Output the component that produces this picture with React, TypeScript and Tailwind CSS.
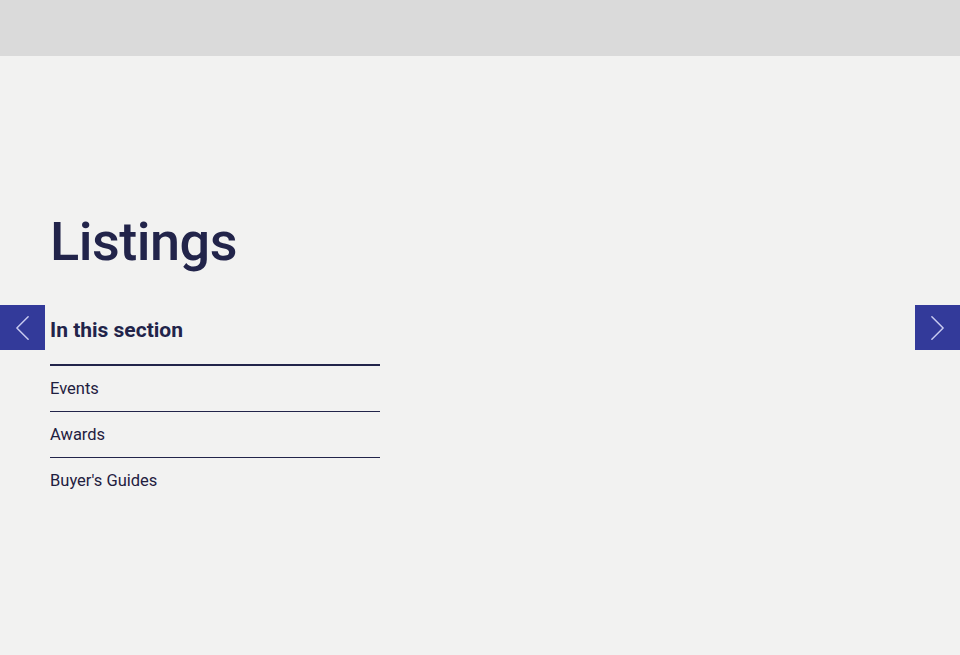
import { ChevronLeft, ChevronRight } from "lucide-react";

const links = ["Events", "Awards", "Buyer's Guides"];

const App = () => {
    return (
        <div className="relative min-h-[655px] bg-[#f2f2f1] font-['Roboto',sans-serif] text-[#22244a]">
            <div className="h-14 bg-[#dadada]" />
            <main className="px-[50px] pt-[159px]">
                <h1 className="text-[54px] font-medium leading-none tracking-[-0.5px]">Listings</h1>
                <section className="mt-[47px] w-[330px]">
                    <h2 className="text-[21px] font-bold leading-[28px] pb-[20px] border-b-2 border-[#22244a]">In this section</h2>
                    <ul>
                        {links.map((link, i) => (
                            <li
                                key={link}
                                className={"pt-px text-[16.5px] leading-[44px] text-[#1f2040] " + (i < links.length - 1 ? "border-b border-[#22244a]" : "")}
                            >
                                {link}
                            </li>
                        ))}
                    </ul>
                </section>
            </main>
            <button className="absolute left-0 top-[305px] flex h-[45px] w-[45px] items-center justify-center bg-[#333a9a] text-[#c9cbf0]">
                <ChevronLeft size={48} strokeWidth={0.8} />
            </button>
            <button className="absolute right-0 top-[305px] flex h-[45px] w-[45px] items-center justify-center bg-[#333a9a] text-[#c9cbf0]">
                <ChevronRight size={48} strokeWidth={0.8} />
            </button>
        </div>
    );
};

export default App;
